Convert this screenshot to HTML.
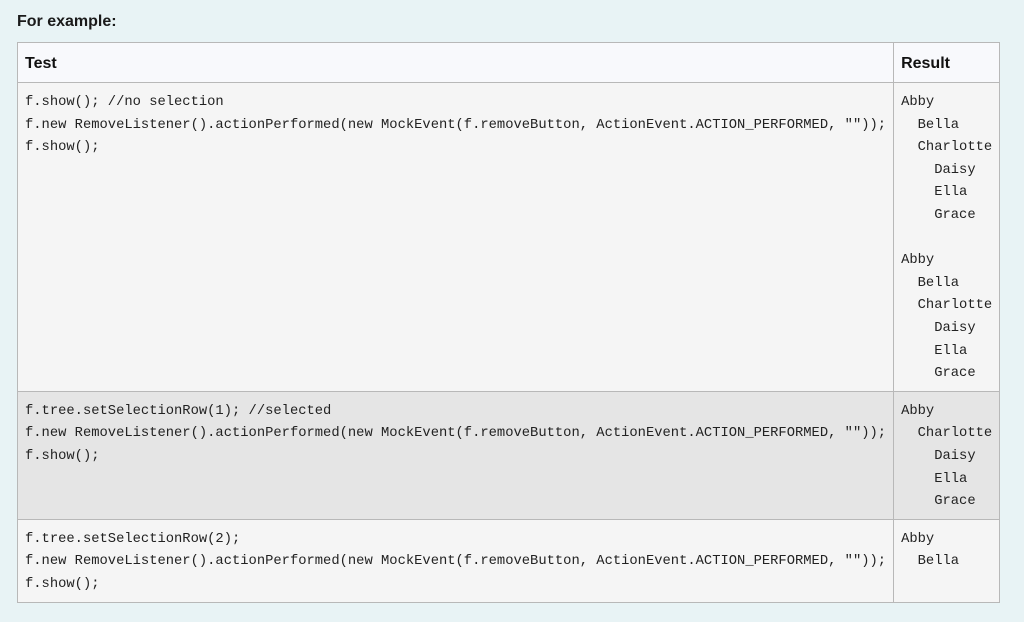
<!DOCTYPE html>
<html><head><style>
body{margin:0;background:#e8f3f5;width:1024px;height:622px;overflow:hidden;font-family:"Liberation Sans",sans-serif;}
h4{position:absolute;left:17px;top:13px;margin:0;font-size:16px;font-weight:bold;color:#1a1a1a;}
table{position:absolute;left:17px;top:42px;border-collapse:collapse;width:983px;}
td,th{border:1px solid #b8b8b8;vertical-align:top;padding:9px 7px 5px 7px;text-align:left;}
th{background:#f8f9fc;font-size:16px;font-weight:bold;color:#111;height:25px;padding:12px 7px 2px 7px;}
td{font-family:"Liberation Mono",monospace;font-size:13.8px;line-height:22.6px;color:#222;white-space:pre;}
tr.a td{background:#f5f5f5;}
tr.b td{background:#e5e5e5;}
td.r{width:90px;}
</style></head><body>
<h4>For example:</h4>
<table>
<tr><th>Test</th><th class="r">Result</th></tr>
<tr class="a" style="height:306px"><td>f.show(); //no selection
f.new RemoveListener().actionPerformed(new MockEvent(f.removeButton, ActionEvent.ACTION_PERFORMED, ""));
f.show();</td><td class="r">Abby
  Bella
  Charlotte
    Daisy
    Ella
    Grace

Abby
  Bella
  Charlotte
    Daisy
    Ella
    Grace</td></tr>
<tr class="b" style="height:128px"><td>f.tree.setSelectionRow(1); //selected
f.new RemoveListener().actionPerformed(new MockEvent(f.removeButton, ActionEvent.ACTION_PERFORMED, ""));
f.show();</td><td class="r">Abby
  Charlotte
    Daisy
    Ella
    Grace</td></tr>
<tr class="a" style="height:82px"><td>f.tree.setSelectionRow(2);
f.new RemoveListener().actionPerformed(new MockEvent(f.removeButton, ActionEvent.ACTION_PERFORMED, ""));
f.show();</td><td class="r">Abby
  Bella</td></tr>
</table>
</body></html>
